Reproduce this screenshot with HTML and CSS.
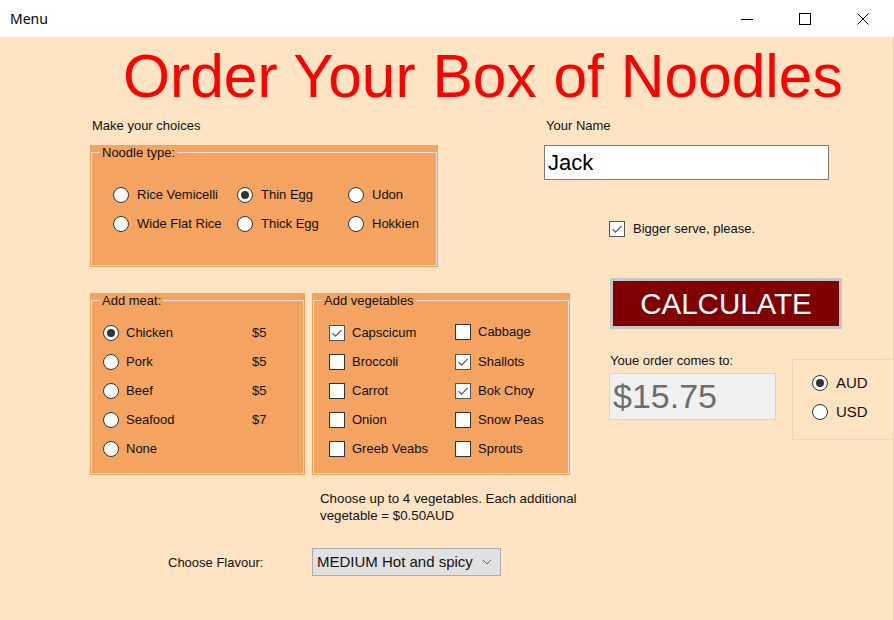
FILE: index.html
```html
<!DOCTYPE html>
<html lang="en">
<head>
<meta charset="utf-8">
<title>Menu</title>
<link rel="stylesheet" href="styles.css">
</head>
<body>
<div class="window">
  <header class="titlebar">
    <span class="wtitle">Menu</span>
    <div class="wctrls">
      <span class="wbtn"><svg width="12" height="12" viewBox="0 0 12 12"><path d="M0 6.5H12" stroke="#000" stroke-width="1"/></svg></span>
      <span class="wbtn"><svg width="12" height="12" viewBox="0 0 12 12"><rect x="0.5" y="0.5" width="11" height="11" fill="none" stroke="#000" stroke-width="1"/></svg></span>
      <span class="wbtn"><svg width="12" height="12" viewBox="0 0 12 12"><path d="M0.5 0.5L11.5 11.5M11.5 0.5L0.5 11.5" stroke="#000" stroke-width="1"/></svg></span>
    </div>
  </header>
  <main class="form">
    <h1 class="title">Order Your Box of Noodles</h1>
    <div class="cols">
      <section class="left">
        <div class="lbl choices">Make your choices</div>
        <div class="group noodle">
          <fieldset>
            <legend>Noodle type:</legend>
            <div class="noodle-grid">
              <div class="opt"><span class="radio"></span><span class="txt">Rice Vemicelli</span></div>
              <div class="opt"><span class="radio on"></span><span class="txt">Thin Egg</span></div>
              <div class="opt"><span class="radio"></span><span class="txt">Udon</span></div>
              <div class="opt"><span class="radio"></span><span class="txt">Wide Flat Rice</span></div>
              <div class="opt"><span class="radio"></span><span class="txt">Thick Egg</span></div>
              <div class="opt"><span class="radio"></span><span class="txt">Hokkien</span></div>
            </div>
          </fieldset>
        </div>
        <div class="addons">
          <div class="group meat">
            <fieldset>
              <legend>Add meat:</legend>
              <div class="meat-list">
                <div class="opt"><span class="radio on"></span><span class="mtxt">Chicken</span><span class="price">$5</span></div>
                <div class="opt"><span class="radio"></span><span class="mtxt">Pork</span><span class="price">$5</span></div>
                <div class="opt"><span class="radio"></span><span class="mtxt">Beef</span><span class="price">$5</span></div>
                <div class="opt"><span class="radio"></span><span class="mtxt">Seafood</span><span class="price">$7</span></div>
                <div class="opt"><span class="radio"></span><span class="mtxt">None</span></div>
              </div>
            </fieldset>
          </div>
          <div class="group veg">
            <fieldset>
              <legend>Add vegetables</legend>
              <div class="veg-grid">
                <div class="opt"><span class="cb on"><svg width="14" height="14" viewBox="0 0 14 14"><path d="M2.5 7.2L5.6 10.2L11.6 3.8" fill="none" stroke="#555" stroke-width="1.2"/></svg></span><span class="vtxt">Capscicum</span></div>
                <div class="opt up"><span class="cb"></span><span class="vtxt">Cabbage</span></div>
                <div class="opt"><span class="cb"></span><span class="vtxt">Broccoli</span></div>
                <div class="opt"><span class="cb on"><svg width="14" height="14" viewBox="0 0 14 14"><path d="M2.5 7.2L5.6 10.2L11.6 3.8" fill="none" stroke="#555" stroke-width="1.2"/></svg></span><span class="vtxt">Shallots</span></div>
                <div class="opt"><span class="cb"></span><span class="vtxt">Carrot</span></div>
                <div class="opt"><span class="cb on"><svg width="14" height="14" viewBox="0 0 14 14"><path d="M2.5 7.2L5.6 10.2L11.6 3.8" fill="none" stroke="#555" stroke-width="1.2"/></svg></span><span class="vtxt">Bok Choy</span></div>
                <div class="opt"><span class="cb"></span><span class="vtxt">Onion</span></div>
                <div class="opt"><span class="cb"></span><span class="vtxt">Snow Peas</span></div>
                <div class="opt"><span class="cb"></span><span class="vtxt">Greeb Veabs</span></div>
                <div class="opt"><span class="cb"></span><span class="vtxt">Sprouts</span></div>
              </div>
            </fieldset>
          </div>
        </div>
        <p class="note">Choose up to 4 vegetables. Each additional<br>vegetable = $0.50AUD</p>
        <div class="flavour">
          <span class="flabel">Choose Flavour:</span>
          <div class="select"><span>MEDIUM Hot and spicy</span><svg class="chev" width="10" height="6" viewBox="0 0 10 6"><path d="M0.8 0.8L5 5L9.2 0.8" fill="none" stroke="#666" stroke-width="1"/></svg></div>
        </div>
      </section>
      <section class="right">
        <div class="lbl name-lbl">Your Name</div>
        <div class="textbox">Jack</div>
        <div class="bigger"><span class="cb on"><svg width="14" height="14" viewBox="0 0 14 14"><path d="M2.5 7.2L5.6 10.2L11.6 3.8" fill="none" stroke="#555" stroke-width="1.2"/></svg></span><span class="btxt">Bigger serve, please.</span></div>
        <button class="calc" type="button">CALCULATE</button>
        <div class="result">
          <div class="total-col">
            <div class="lbl order-lbl">Youe order comes to:</div>
            <div class="total">$15.75</div>
          </div>
          <div class="currency">
            <div class="copt"><span class="radio on"></span><span class="ctxt">AUD</span></div>
            <div class="copt"><span class="radio"></span><span class="ctxt">USD</span></div>
          </div>
        </div>
      </section>
    </div>
  </main>
</div>
</body>
</html>
```
FILE: styles.css
```css
* {
  box-sizing: border-box;
}

html,
body {
  margin: 0;
  width: 894px;
  height: 620px;
  overflow: hidden;
}

body {
  font-family: "Liberation Sans", Arial, sans-serif;
  font-size: 13px;
  line-height: 16px;
  color: #111;
  background: #fff;
}

.titlebar {
  height: 37px;
  display: flex;
  align-items: center;
  justify-content: space-between;
  background: #fff;
}

.wtitle {
  margin-left: 10px;
  font-family: "Noto Sans", "Liberation Sans", sans-serif;
  font-size: 14px;
  color: #000;
}

.wctrls {
  display: flex;
  height: 37px;
  margin-right: 2px;
}

.wbtn {
  width: 58px;
  display: flex;
  align-items: center;
  justify-content: center;
}

.form {
  height: 583px;
  background: #ffe4c4;
  padding-top: 9px;
  border-right: 1px solid #e4cfb4;
}

.title {
  margin: 0 0 0 123px;
  font-size: 60.5px;
  line-height: 60px;
  font-weight: normal;
  color: #ff0000;
  white-space: nowrap;
}

.cols {
  display: flex;
  padding-top: 12px;
}

.left {
  margin-left: 90px;
  width: 454px;
  flex: none;
}

.right {
  width: 350px;
  flex: none;
}

.lbl {
  line-height: 16px;
  white-space: nowrap;
}

.choices {
  margin-left: 2px;
}

/* group boxes */
.group {
  background: #f4a460;
  padding: 0 1px 1px 1px;
}

.group fieldset {
  margin: 0;
  min-width: 0;
  height: 100%;
  border: 1px solid #dedede;
  padding: 0 0 0 8px;
}

.group legend {
  padding: 0 2px;
  line-height: 15px;
  color: #111;
}

.noodle {
  margin-top: 11px;
  width: 348px;
  height: 122px;
}

.noodle-grid {
  display: grid;
  grid-template-columns: 124px 111px auto;
  grid-auto-rows: 29px;
  margin-top: 20px;
  padding-left: 13px;
}

.opt {
  display: flex;
  align-items: center;
  white-space: nowrap;
}

.radio {
  flex: none;
  width: 16px;
  height: 16px;
  border: 1px solid #333;
  border-radius: 50%;
  background: #fff;
  display: flex;
  align-items: center;
  justify-content: center;
}

.radio.on::after {
  content: "";
  width: 8px;
  height: 8px;
  border-radius: 50%;
  background: #333;
}

.cb {
  flex: none;
  width: 16px;
  height: 16px;
  border: 1px solid #333;
  background: #fff;
  display: flex;
  align-items: center;
  justify-content: center;
}

.cb.on {
  border-color: #555;
}

.txt {
  margin-left: 8px;
}

.addons {
  display: flex;
  gap: 7px;
  margin-top: 26px;
  width: 480px;
}

.meat {
  width: 215px;
  height: 182px;
}

.meat-list {
  display: grid;
  grid-auto-rows: 29px;
  margin-top: 10px;
  padding-left: 3px;
}

.mtxt {
  margin-left: 7px;
  width: 126px;
}

.veg {
  width: 258px;
  height: 182px;
}

.veg-grid {
  display: grid;
  grid-template-columns: 126px auto;
  grid-auto-rows: 29px;
  margin-top: 10px;
  padding-left: 7px;
}

.veg-grid .up {
  margin-top: -2px;
}

.vtxt {
  margin-left: 7px;
}

.note {
  margin: 15px 0 0 230px;
  line-height: 17px;
  white-space: nowrap;
  font-size: 13.3px;
}

.flavour {
  display: flex;
  align-items: center;
  margin-top: 24px;
}

.flabel {
  margin-left: 78px;
  width: 144px;
  padding-top: 2px;
}

.select {
  width: 189px;
  height: 28px;
  background: #e1e1e1;
  border: 1px solid #adadad;
  display: flex;
  align-items: center;
  justify-content: space-between;
  padding: 0 8px 0 4px;
  font-size: 15px;
  color: #111;
}

.chev {
  flex: none;
}

/* right column */
.name-lbl {
  margin-left: 2px;
}

.textbox {
  margin-top: 11px;
  width: 285px;
  height: 35px;
  border: 1px solid #7a7a7a;
  background: #fff;
  font-size: 22px;
  line-height: 33px;
  padding-left: 3px;
  color: #000;
}

.bigger {
  display: flex;
  align-items: center;
  margin: 41px 0 0 65px;
  height: 16px;
}

.btxt {
  margin-left: 8px;
}

.calc {
  display: block;
  margin: 41px 0 0 66px;
  width: 232px;
  height: 51px;
  background: #800000;
  border: 3px solid #c6c6c6;
  color: #fff;
  font-family: "Liberation Sans", Arial, sans-serif;
  font-size: 29.5px;
  line-height: 45px;
  padding: 0;
  text-align: center;
}

.result {
  display: flex;
  margin-top: 24px;
}

.total-col {
  margin-left: 65px;
}

.order-lbl {
  margin-left: 1px;
}

.total {
  margin-top: 4px;
  width: 167px;
  height: 47px;
  background: #f0f0f0;
  border: 1px solid #d4d4d4;
  font-size: 34px;
  line-height: 45px;
  padding-left: 3px;
  color: #6d6d6d;
}

.currency {
  margin: 6px 0 0 16px;
  width: 102px;
  height: 81px;
  border: 1px solid #ead7c1;
  padding: 8px 0 0 19px;
}

.copt {
  display: flex;
  align-items: center;
  height: 29px;
}

.ctxt {
  margin-left: 8px;
  font-size: 15px;
}
```
